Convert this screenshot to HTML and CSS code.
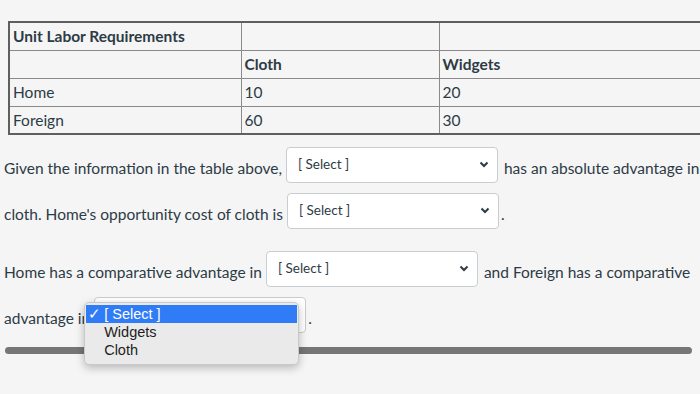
FILE: index.html
```html
<!DOCTYPE html>
<html lang="en">
    <head>
        <meta charset="UTF-8">
        <meta name="viewport" content="width=device-width, initial-scale=1.0">
        <title>Comparative Advantage Quiz</title>
        <link rel="stylesheet" href="styles.css">
    </head>
    <body>
        <table class="labor-table">
            <tr>
                <th class="col-country">Unit Labor Requirements</th>
                <td class="col-cloth"></td>
                <td></td>
            </tr>
            <tr>
                <td></td>
                <th>Cloth</th>
                <th>Widgets</th>
            </tr>
            <tr>
                <td>Home</td>
                <td>10</td>
                <td>20</td>
            </tr>
            <tr>
                <td>Foreign</td>
                <td>60</td>
                <td>30</td>
            </tr>
        </table>

        <div class="question">
            <p>Given the information in the table above,
                <span class="select"><span class="select-label">[ Select ]</span><svg class="chevron" width="10" height="7" viewBox="0 0 10 7"><path d="M1.5 1.5 5 5l3.5-3.5"/></svg></span>
                has an absolute advantage in cloth. Home's opportunity cost of cloth is
                <span class="select"><span class="select-label">[ Select ]</span><svg class="chevron" width="10" height="7" viewBox="0 0 10 7"><path d="M1.5 1.5 5 5l3.5-3.5"/></svg></span>.</p>

            <p>Home has a comparative advantage in
                <span class="select"><span class="select-label">[ Select ]</span><svg class="chevron" width="10" height="7" viewBox="0 0 10 7"><path d="M1.5 1.5 5 5l3.5-3.5"/></svg></span>
                and Foreign has a comparative advantage in
                <span class="select is-open"><span class="select-label">[ Select ]</span><svg class="chevron" width="10" height="7" viewBox="0 0 10 7"><path d="M1.5 1.5 5 5l3.5-3.5"/></svg><span class="select-menu"><span class="menu-item selected"><span class="check">✓</span>[ Select ]</span><span class="menu-item">Widgets</span><span class="menu-item">Cloth</span></span></span>.</p>
        </div>

        <div class="divider"></div>
    </body>
</html>
```

FILE: styles.css
```css
* {
    margin: 0;
    padding: 0;
    box-sizing: border-box;
}

html {
    overflow: hidden;
}

body {
    min-height: 100vh;
    background: #f5f5f5;
    color: #2d3b45;
    font-family: Lato, 'Open Sans', sans-serif;
    font-size: 15.5px;
    padding: 21px 0 0 4px;
}

.labor-table {
    width: 704px;
    margin-left: 4px;
    border-collapse: collapse;
    border: 2px solid #5f5f5f;
}

.labor-table th,
.labor-table td {
    height: 28px;
    padding: 0 3px;
    text-align: left;
    border: 1px solid #8a8a8a;
    line-height: 26px;
}

.labor-table th {
    font-weight: 700;
}

.col-country {
    width: 232px;
}

.col-cloth {
    width: 198px;
}

.question {
    margin-top: 10px;
    width: 702px;
}

.question p {
    line-height: 46px;
    margin-bottom: 12px;
}

.select {
    position: relative;
    display: inline-flex;
    align-items: center;
    justify-content: space-between;
    width: 212px;
    height: 36px;
    margin-right: 2px;
    padding: 0 8px 0 11px;
    vertical-align: 5px;
    background: #fff;
    border: 1px solid #c7cdd1;
    border-radius: 4px;
    line-height: 1;
}

.select-label {
    font-size: 13.5px;
    color: #2d3b45;
}

.chevron path {
    fill: none;
    stroke: #2d3b45;
    stroke-width: 2;
}

.select-menu {
    position: absolute;
    left: -11px;
    top: 4px;
    display: block;
    width: 215px;
    padding: 2px 1px 5px;
    background: #eaeaea;
    border: 1px solid #c9c9c9;
    border-radius: 5px;
    box-shadow: 0 3px 8px rgba(0, 0, 0, 0.25);
    font-family: 'Liberation Sans', Arial, sans-serif;
    font-size: 14.5px;
    color: #1e1e1e;
    z-index: 2;
}

.menu-item {
    position: relative;
    display: block;
    height: 18px;
    line-height: 18px;
    padding-left: 18px;
}

.menu-item.selected {
    background: #2f7cf6;
    color: #fff;
}

.check {
    position: absolute;
    left: 2px;
    top: 0;
}

.divider {
    width: 687px;
    height: 7px;
    margin: -6px 0 0 1px;
    background: #767676;
    border-radius: 4px;
}
```
